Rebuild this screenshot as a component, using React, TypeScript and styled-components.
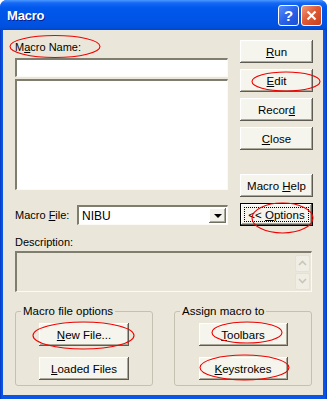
import React from "react";
import styled, { createGlobalStyle } from "styled-components";

const Global = createGlobalStyle`
  html, body { margin: 0; padding: 0; background: #ffffff; }
  body { font-family: "Liberation Sans", Arial, sans-serif; font-size: 11px; color: #000; }
  #root { width: 327px; height: 399px; }
`;

const Window = styled.div`
  position: relative;
  width: 327px;
  height: 399px;
  display: flex;
  flex-direction: column;
  border-radius: 7px 7px 0 0;
  overflow: hidden;
  background: #0852e4;
`;

const TitleBar = styled.div`
  height: 30px;
  flex: none;
  display: flex;
  align-items: center;
  gap: 2px;
  padding: 0 5px 0 7px;
  background: linear-gradient(
    180deg,
    #4a98ff 0px,
    #1568f5 3px,
    #0058ec 8px,
    #0054e6 20px,
    #0050de 27px,
    #0046c8 30px
  );
`;

const Title = styled.span`
  flex: 1;
  color: #fff;
  font-weight: bold;
  font-size: 13px;
  text-shadow: 1px 1px #0a1e8c;
  letter-spacing: -0.2px;
`;

const CaptionButton = styled.div<{ $kind: "help" | "close" }>`
  width: 21px;
  height: 21px;
  box-sizing: border-box;
  border: 1px solid #fff;
  border-radius: 3px;
  display: flex;
  align-items: center;
  justify-content: center;
  color: #fff;
  font-weight: bold;
  font-size: 15px;
  background: ${(p) =>
    p.$kind === "help"
      ? "linear-gradient(135deg, #5b8ff8 0%, #2a62ea 50%, #1b4fd6 100%)"
      : "linear-gradient(135deg, #f29b7d 0%, #e05a36 45%, #c8401c 100%)"};
`;

const Frame = styled.div`
  flex: 1;
  display: flex;
  padding: 0 4px 4px 3px;
  background: linear-gradient(90deg, #0638c0 0px, #0a55e6 2px, #0a55e6 calc(100% - 2px), #0638c0 100%);
`;

const Body = styled.div`
  flex: 1;
  display: flex;
  flex-direction: column;
  padding: 10px 10px 0 12px;
  background: #eae7da;
`;

const TopSection = styled.div`
  display: flex;
  gap: 12px;
  align-items: flex-start;
`;

const LeftCol = styled.div`
  width: 213px;
  display: flex;
  flex-direction: column;
`;

const RightCol = styled.div`
  width: 73px;
  display: flex;
  flex-direction: column;
  gap: 6px;
`;

const Label = styled.div`
  line-height: 14px;
  height: 14px;
  white-space: nowrap;
`;

const NameLabel = styled(Label)`
  margin-bottom: 4px;
`;

const U = styled.span`
  text-decoration: underline;
`;

const Sunken = styled.div`
  box-sizing: border-box;
  border-style: solid;
  border-width: 2px 1px 1px 2px;
  border-color: #7f7d6e #fbfaf4 #fbfaf4 #7f7d6e;
`;

const NameInput = styled(Sunken)`
  height: 19px;
  background: #fff;
`;

const ListBox = styled(Sunken)`
  margin-top: 2px;
  height: 111px;
  background: #fff;
`;

const FileRow = styled.div`
  margin-top: 15px;
  display: flex;
  align-items: center;
`;

const FileLabel = styled(Label)`
  width: 62px;
`;

const Combo = styled(Sunken)`
  width: 151px;
  height: 20px;
  background: #fff;
  display: flex;
  align-items: center;
`;

const ComboText = styled.span`
  flex: 1;
  padding-left: 3px;
  font-size: 12px;
`;

const DropButton = styled.div`
  width: 17px;
  height: 15px;
  margin-right: 1px;
  box-sizing: border-box;
  background: #f2f1ea;
  box-shadow: inset -1px -1px #716f64, inset 1px 1px #ffffff, inset -2px -2px #aca899;
  display: flex;
  align-items: center;
  justify-content: center;
`;

const Triangle = styled.div`
  width: 0;
  height: 0;
  border-left: 4px solid transparent;
  border-right: 4px solid transparent;
  border-top: 4px solid #000;
  margin-top: 1px;
`;

const Button = styled.button<{ $default?: boolean; $w?: number }>`
  position: relative;
  width: ${(p) => (p.$w ? `${p.$w}px` : "100%")};
  height: 23px;
  flex: none;
  box-sizing: border-box;
  margin: 0;
  padding: 0;
  font-family: inherit;
  font-size: 11.5px;
  color: #000;
  background: #f5f4ed;
  border: ${(p) => (p.$default ? "1px solid #000" : "none")};
  box-shadow: inset -1px -1px #5e5c52, inset 1px 1px #ffffff, inset -2px -2px #aca899,
    inset 2px 2px #f6f5ee;
  ${(p) =>
    p.$default &&
    `
    &::after {
      content: "";
      position: absolute;
      inset: 3px;
      border: 1px dotted #000;
    }
  `}
`;

const HelpButton = styled(Button)`
  margin-top: 18px;
`;

const DescLabel = styled(Label)`
  margin-top: 9px;
`;

const DescBox = styled(Sunken)`
  margin-top: 2px;
  width: 297px;
  height: 41px;
  display: flex;
  justify-content: flex-end;
  align-items: center;
  padding-right: 1px;
`;

const ScrollCol = styled.div`
  display: flex;
  flex-direction: column;
  gap: 1px;
`;

const ScrollBtn = styled.div`
  width: 15px;
  height: 17px;
  box-sizing: border-box;
  border: 1px solid #e4e2d6;
  border-radius: 2px;
  background: #efede4;
  display: flex;
  align-items: center;
  justify-content: center;
`;

const GroupsRow = styled.div`
  margin-top: 13px;
  display: flex;
  gap: 21px;
`;

const Group = styled.fieldset`
  margin: 0;
  width: 138px;
  min-width: 0;
  box-sizing: border-box;
  border: 1px solid #c4c1b0;
  border-radius: 3px;
  padding: 5px 0 5px 0;
  display: flex;
  flex-direction: column;
  align-items: center;
  gap: 11px;
`;

const Legend = styled.legend`
  padding: 0 2px;
  margin-left: 5px;
  line-height: 13px;
  font-size: 11.5px;
`;

const Overlay = styled.svg`
  position: absolute;
  left: 0;
  top: 0;
  pointer-events: none;
`;

const Chevron = ({ up }: { up?: boolean }) => (
  <svg width="9" height="6" viewBox="0 0 9 6">
    <polyline
      points={up ? "1,5 4.5,1.5 8,5" : "1,1 4.5,4.5 8,1"}
      fill="none"
      stroke="#c9c6b6"
      strokeWidth="1.6"
    />
  </svg>
);

export default function App() {
  return (
    <>
      <Global />
      <Window>
        <TitleBar>
          <Title>Macro</Title>
          <CaptionButton $kind="help">?</CaptionButton>
          <CaptionButton $kind="close">
            <svg width="11" height="11" viewBox="0 0 11 11">
              <path d="M1.5 1.5 L9.5 9.5 M9.5 1.5 L1.5 9.5" stroke="#fff" strokeWidth="2.2" />
            </svg>
          </CaptionButton>
        </TitleBar>
        <Frame>
          <Body>
            <TopSection>
              <LeftCol>
                <NameLabel>
                  M<U>a</U>cro Name:
                </NameLabel>
                <NameInput />
                <ListBox />
                <FileRow>
                  <FileLabel>
                    Macro <U>F</U>ile:
                  </FileLabel>
                  <Combo>
                    <ComboText>NIBU</ComboText>
                    <DropButton>
                      <Triangle />
                    </DropButton>
                  </Combo>
                </FileRow>
              </LeftCol>
              <RightCol>
                <Button>
                  <U>R</U>un
                </Button>
                <Button>
                  <U>E</U>dit
                </Button>
                <Button>
                  Recor<U>d</U>
                </Button>
                <Button>
                  <U>C</U>lose
                </Button>
                <HelpButton>
                  Macro <U>H</U>elp
                </HelpButton>
                <Button $default>
                  &lt;&lt; <U>O</U>ptions
                </Button>
              </RightCol>
            </TopSection>
            <DescLabel>Description:</DescLabel>
            <DescBox>
              <ScrollCol>
                <ScrollBtn>
                  <Chevron up />
                </ScrollBtn>
                <ScrollBtn>
                  <Chevron />
                </ScrollBtn>
              </ScrollCol>
            </DescBox>
            <GroupsRow>
              <Group>
                <Legend>Macro file options</Legend>
                <Button $w={90}>
                  <U>N</U>ew File...
                </Button>
                <Button $w={90}>
                  <U>L</U>oaded Files
                </Button>
              </Group>
              <Group>
                <Legend>Assign macro to</Legend>
                <Button $w={89}>
                  <U>T</U>oolbars
                </Button>
                <Button $w={89}>
                  <U>K</U>eystrokes
                </Button>
              </Group>
            </GroupsRow>
          </Body>
        </Frame>
        <Overlay width="327" height="399" viewBox="0 0 327 399">
          <g fill="none" stroke="#f00000" strokeWidth="1.1">
            <ellipse cx="55" cy="46.5" rx="45" ry="11" />
            <ellipse cx="286" cy="81.5" rx="34" ry="9.5" />
            <ellipse cx="282.5" cy="218" rx="30.5" ry="15" />
            <ellipse cx="83.5" cy="335.5" rx="50.5" ry="13.5" />
            <ellipse cx="247" cy="332.5" rx="35" ry="10.5" />
            <ellipse cx="244.5" cy="367.5" rx="44.5" ry="12.5" />
          </g>
        </Overlay>
      </Window>
    </>
  );
}
